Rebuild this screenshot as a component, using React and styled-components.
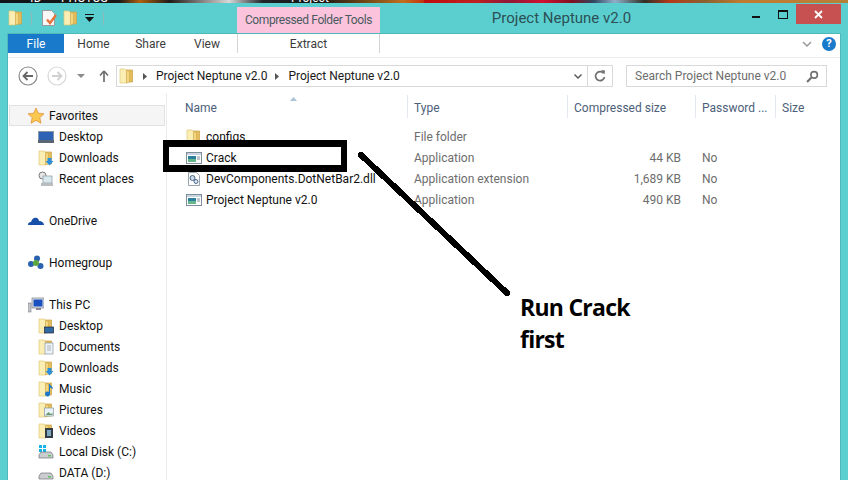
import { Fragment } from "react";
import styled, { createGlobalStyle } from "styled-components";

const Global = createGlobalStyle`
  html, body { margin: 0; padding: 0; background: #5bcfcf; }
  body { font-family: Roboto, "Open Sans", sans-serif; font-size: 12px; color: #1a1a1a; }
  * { box-sizing: border-box; }
`;

const Screen = styled.div`
  position: relative;
  width: 848px;
  height: 480px;
  overflow: hidden;
  background: #5bcfcf;
`;

// the bit of wallpaper that shows above the window
const Wallpaper = styled.div`
  position: relative;
  height: 3px;
  display: flex;
  overflow: hidden;
`;

const WallHalf = styled.div`
  flex: 1;
  background: ${(p) => p.$bg};
`;

const WallLabel = styled.span`
  position: absolute;
  left: ${(p) => p.$x}px;
  top: -8px;
  font-size: 12px;
  line-height: 12px;
  color: #fff;
`;

const TitleBar = styled.div`
  height: 30px;
  display: flex;
  padding-left: 8px;
`;

const Quick = styled.div`
  display: flex;
  align-items: center;
  height: 30px;
  width: 229px;
`;

const QuickSlot = styled.div`
  display: flex;
  margin-left: ${(p) => p.$ml || 0}px;
`;

const QuickSep = styled.div`
  width: 1px;
  height: 13px;
  margin-left: ${(p) => p.$ml}px;
  background: #8fb8b8;
`;

const ToolsTab = styled.div`
  width: 143px;
  height: 26px;
  margin-top: 4px;
  background: #fbc4dc;
  color: #4a5a5e;
  letter-spacing: -0.4px;
  display: flex;
  align-items: center;
  justify-content: center;
`;

const WindowTitle = styled.div`
  flex: 1;
  text-align: center;
  font-size: 15px;
  line-height: 31px;
  color: #2c5056;
`;

const Controls = styled.div`
  display: flex;
  align-items: flex-start;
  margin: 1px 7px 0 0;
`;

const Ctrl = styled.div`
  width: ${(p) => p.$w}px;
  height: 20px;
  display: flex;
  align-items: center;
  justify-content: center;
  background: ${(p) => p.$bg || "transparent"};
`;

const Win = styled.div`
  margin: 0 7px;
  height: 447px;
  background: #fff;
  border: 1px solid #4fb8b8;
  border-bottom: none;
  display: flex;
  flex-direction: column;
`;

const Ribbon = styled.div`
  height: 19px;
  display: flex;
  align-items: stretch;
`;

const FileTab = styled.div`
  width: 56px;
  background: #1979ca;
  color: #fff;
  display: flex;
  align-items: center;
  justify-content: center;
`;

const Tab = styled.div`
  width: ${(p) => p.$w}px;
  display: flex;
  align-items: center;
  justify-content: center;
  color: #3c3c3c;
`;

const ExtractTab = styled(Tab)`
  border-left: 1px solid #d4d4d4;
  border-right: 1px solid #d4d4d4;
  margin-left: 1px;
`;

const RibbonEnd = styled.div`
  margin-left: auto;
  display: flex;
  align-items: center;
  gap: 10px;
  padding-right: 4px;
`;

const Help = styled.div`
  width: 14px;
  height: 14px;
  border-radius: 50%;
  background: #1979ca;
  color: #fff;
  font-weight: 700;
  font-size: 11px;
  line-height: 14px;
  text-align: center;
`;

const NavBar = styled.div`
  height: 36px;
  margin-top: 4px;
  border-top: 1px solid #ececec;
  display: flex;
  align-items: flex-start;
  padding: 7px 13px 0 10px;
`;

const NavButtons = styled.div`
  display: flex;
  align-items: center;
  width: 98px;
  height: 22px;
`;

const NavSlot = styled.div`
  display: flex;
  margin-right: ${(p) => p.$mr}px;
`;

const Address = styled.div`
  width: 497px;
  height: 22px;
  border: 1px solid #d9d9d9;
  display: flex;
  align-items: center;
  padding-left: 2px;
  color: #1a1a1a;
`;

const Crumb = styled.span`
  display: inline-flex;
  align-items: center;
  gap: 9px;
  margin-left: 8px;
`;

const Chevron = styled.div`
  margin-left: auto;
  width: 14px;
  display: flex;
  justify-content: center;
  margin-right: 2px;
`;

const Refresh = styled.div`
  width: 25px;
  height: 100%;
  border-left: 1px solid #d9d9d9;
  display: flex;
  align-items: center;
  justify-content: center;
`;

const Search = styled.div`
  width: 201px;
  height: 22px;
  margin-left: 13px;
  border: 1px solid #d9d9d9;
  display: flex;
  align-items: center;
  justify-content: space-between;
  padding: 0 7px 0 8px;
  color: #6d6d6d;
`;

const Body = styled.div`
  flex: 1;
  display: flex;
  min-height: 0;
`;

const NavPane = styled.div`
  width: 159px;
  border-right: 1px solid #ececec;
  padding-top: 12px;
  flex-shrink: 0;
`;

const NavRow = styled.div`
  height: 21px;
  display: flex;
  align-items: center;
  gap: 5px;
  padding-left: ${(p) => (p.$sub ? 28 : 18)}px;
  margin-bottom: ${(p) => p.$gap || 0}px;
  margin-left: 1px;
  margin-right: 1px;
  color: #111;
  border: 1px solid ${(p) => (p.$active ? "#e2e2e2" : "transparent")};
  background: ${(p) => (p.$active ? "#f5f5f5" : "transparent")};
  white-space: nowrap;
`;

const NavIcon = styled.div`
  width: 16px;
  height: 16px;
  flex-shrink: 0;
  display: flex;
`;

const Files = styled.div`
  flex: 1;
  position: relative;
  padding: 2px 0 0 13px;
`;

const SortMark = styled.svg`
  position: absolute;
  left: 123px;
  top: 4px;
`;

const Grid = styled.div`
  display: grid;
  grid-template-columns: 227px 160px 128px 80px 60px;
`;

const Head = styled.div`
  height: 23px;
  display: flex;
  align-items: center;
  color: #4c607a;
  padding: 2px 0 0 ${(p) => p.$pl || 6}px;
  border-left: ${(p) => (p.$first ? "none" : "1px solid #e3e9ef")};
  margin-bottom: 8px;
  white-space: nowrap;
`;

const NameCell = styled.div`
  height: 21px;
  display: flex;
  align-items: center;
  gap: 4px;
  padding-left: 6px;
  color: #111;
  white-space: nowrap;
`;

const Cell = styled.div`
  height: 21px;
  display: flex;
  align-items: center;
  color: #6d6d6d;
  padding-left: 7px;
  white-space: nowrap;
`;

const SizeCell = styled(Cell)`
  justify-content: flex-end;
  padding-right: 14px;
`;

const Overlay = styled.svg`
  position: absolute;
  left: 0;
  top: 0;
  pointer-events: none;
`;

const Marker = styled.div`
  position: absolute;
  left: 163px;
  top: 140px;
  width: 184px;
  height: 32px;
  border: solid #000;
  border-width: 7px 6px;
`;

const Note = styled.div`
  position: absolute;
  left: 520px;
  top: 291px;
  width: 130px;
  font-family: "Open Sans", sans-serif;
  font-size: 23px;
  line-height: 32px;
  font-weight: 700;
  color: #000;
  letter-spacing: -0.75px;
`;

function Folder({ badge }) {
  return (
    <svg width="16" height="16" viewBox="0 0 16 16">
      <path d="M6 2h7.500v12H6z" fill="#e4bd5a" stroke="#c9a248" strokeWidth=".7" />
      <path d="M1 1h5l1.500 1.500V15H1z" fill="#fbeeb4" stroke="#e0c878" strokeWidth=".7" />
      <path d="M7.500 2.500l3 1V14l-3 1z" fill="#f2d680" stroke="#c9a248" strokeWidth=".5" />
      {badge}
    </svg>
  );
}

const arrowBadge = <path d="M9.500 8h4v3h2l-4 4.500-4-4.500h2z" fill="#2b8fdc" />;
const screenBadge = <rect x="6.500" y="9" width="9" height="6" fill="#2f6aa5" stroke="#223" strokeWidth=".7" />;
const docBadge = <g><rect x="7" y="4" width="8" height="11" fill="#eef3f8" stroke="#8a97a5" strokeWidth=".7" /><path d="M9 7h4M9 9h4M9 11h4" stroke="#8a97a5" strokeWidth=".7" /></g>;
const musicBadge = <path d="M11 3h1c0 2 3 2 3 5l-3-1.500V13a2.500 2.500 0 1 1-1-2z" fill="#1a78c8" />;
const picBadge = <g><rect x="6.500" y="6" width="9" height="8" fill="#e8f2f8" stroke="#8a97a5" strokeWidth=".7" /><path d="M7.500 13l3-3 2 2 2-1v2z" fill="#6a9c6e" /></g>;
const videoBadge = <g><rect x="7" y="5" width="8" height="10" fill="#333c44" /><rect x="9" y="7" width="4" height="6" fill="#7fa9c0" /></g>;

function AppIcon() {
  return (
    <svg width="16" height="16" viewBox="0 0 16 16">
      <rect x=".5" y="2.500" width="15" height="11" fill="#fff" stroke="#7f8c99" />
      <rect x="1" y="3" width="14" height="2" fill="#c8d4e0" />
      <rect x="2" y="6" width="8" height="6" fill="#2a7f9e" />
      <rect x="2" y="9" width="8" height="3" fill="#67b58a" />
      <path d="M11 7h3M11 9h3" stroke="#7f8c99" />
    </svg>
  );
}

function DllIcon() {
  return (
    <svg width="16" height="16" viewBox="0 0 16 16">
      <path d="M2.500 1.500h8l3 3v10h-11z" fill="#fff" stroke="#9aa4ae" />
      <circle cx="6.500" cy="7" r="2.500" fill="#cfdbe8" stroke="#48668a" />
      <circle cx="10" cy="10.500" r="2" fill="#dfe7ef" stroke="#48668a" />
    </svg>
  );
}

function Drive({ win }) {
  return (
    <svg width="16" height="16" viewBox="0 0 16 16">
      {win && <path d="M1 1h3v3H1zM5 1h3v3H5zM1 5h3v3H1zM5 5h3v3H5z" fill="#17b4e8" />}
      <path d="M1 11l2-3h10l2 3v3H1z" fill="#c9cdd0" stroke="#6e7478" strokeWidth=".7" />
      <rect x="10" y="11" width="3" height="1.500" fill="#5fc25f" />
    </svg>
  );
}

const favourites = [
  { name: "Desktop", icon: (
    <svg width="16" height="16" viewBox="0 0 16 16">
      <rect x="0" y="2" width="16" height="12" fill="#8a98a6" />
      <rect x="1" y="3" width="14" height="8" fill="#2d62b5" />
      <rect x="0" y="11" width="16" height="3" fill="#5a6672" />
    </svg>
  ) },
  { name: "Downloads", icon: <Folder badge={arrowBadge} /> },
  { name: "Recent places", icon: (
    <svg width="16" height="16" viewBox="0 0 16 16">
      <circle cx="4.500" cy="4.500" r="3.500" fill="#e6e6e6" stroke="#7a7a7a" />
      <rect x="5" y="5" width="9" height="7" fill="#d8e8ee" stroke="#8a97a5" strokeWidth=".7" />
      <rect x="3" y="12" width="12" height="3" fill="#b9bdc0" />
    </svg>
  ) },
];

const pcFolders = [
  { name: "Desktop", badge: screenBadge },
  { name: "Documents", badge: docBadge },
  { name: "Downloads", badge: arrowBadge },
  { name: "Music", badge: musicBadge },
  { name: "Pictures", badge: picBadge },
  { name: "Videos", badge: videoBadge },
];

const files = [
  { name: "configs", type: "File folder", icon: <Folder /> },
  { name: "Crack", type: "Application", size: "44 KB", pw: "No", icon: <AppIcon /> },
  { name: "DevComponents.DotNetBar2.dll", type: "Application extension", size: "1,689 KB", pw: "No", icon: <DllIcon /> },
  { name: "Project Neptune v2.0", type: "Application", size: "490 KB", pw: "No", icon: <AppIcon /> },
];

export default function App() {
  return (
    <Screen>
      <Global />
      <Wallpaper>
        <WallHalf $bg="linear-gradient(90deg,#101418 0,#181818 28%,#b06010 33%,#201c18 40%,#d8d8d8 54%,#202428 62%,#141414 75%,#805018 88%,#c07020 95%,#c83010 100%)" />
        <WallHalf $bg="linear-gradient(90deg,#c00c0c 0,#c02020 12%,#901838 20%,#d01030 28%,#801020 35%,#304860 40%,#90b0c8 45%,#303028 52%,#b83818 58%,#8a6030 66%,#c07c30 75%,#b88038 100%)" />
        <WallLabel $x={27}>4D</WallLabel>
        <WallLabel $x={61}>PHOTOS</WallLabel>
        <WallLabel $x={291}>Project</WallLabel>
      </Wallpaper>
      <TitleBar>
        <Quick>
          <QuickSlot><Folder /></QuickSlot>
          <QuickSep $ml={7} />
          <QuickSlot $ml={10}>
            <svg width="16" height="16" viewBox="0 0 16 16">
              <path d="M.5 .5h9l3 3v12H.5z" fill="#f8f8f8" stroke="#9a9a9a" />
              <path d="M5 9.500l3 3.500 6-8" fill="none" stroke="#e9733c" strokeWidth="2.400" />
            </svg>
          </QuickSlot>
          <QuickSlot $ml={5}><Folder /></QuickSlot>
          <QuickSlot $ml={6}>
            <svg width="9" height="8" viewBox="0 0 9 8">
              <path d="M0 .5h9" stroke="#111" />
              <path d="M0 3h9L4.500 8z" fill="#111" />
            </svg>
          </QuickSlot>
          <QuickSep $ml={9} />
        </Quick>
        <ToolsTab>Compressed Folder Tools</ToolsTab>
        <WindowTitle>Project Neptune v2.0</WindowTitle>
        <Controls>
          <Ctrl $w={26}>
            <svg width="8" height="7"><rect width="8" height="2" y="5" fill="#111" /></svg>
          </Ctrl>
          <Ctrl $w={27}>
            <svg width="10" height="9"><rect x=".5" y=".5" width="9" height="8" fill="none" stroke="#111" /><rect width="10" height="2" fill="#111" /></svg>
          </Ctrl>
          <Ctrl $w={45} $bg="#c75050">
            <svg width="9" height="9" viewBox="0 0 9 9"><path d="M1 1l7 7M8 1l-7 7" stroke="#fff" strokeWidth="1.800" /></svg>
          </Ctrl>
        </Controls>
      </TitleBar>
      <Win>
        <Ribbon>
          <FileTab>File</FileTab>
          <Tab $w={59}>Home</Tab>
          <Tab $w={55}>Share</Tab>
          <Tab $w={58}>View</Tab>
          <ExtractTab $w={143}>Extract</ExtractTab>
          <RibbonEnd>
            <svg width="10" height="6" viewBox="0 0 10 6"><path d="M1 1l4 4 4-4" fill="none" stroke="#9a9a9a" strokeWidth="1.500" /></svg>
            <Help>?</Help>
          </RibbonEnd>
        </Ribbon>
        <NavBar>
          <NavButtons>
            <NavSlot $mr={9}>
              <svg width="20" height="20" viewBox="0 0 20 20">
                <circle cx="10" cy="10" r="9" fill="#fff" stroke="#8a8a8a" strokeWidth="1.200" />
                <path d="M15 10H6M9.500 6L5.500 10l4 4" fill="none" stroke="#666" strokeWidth="1.800" />
              </svg>
            </NavSlot>
            <NavSlot $mr={10}>
              <svg width="20" height="20" viewBox="0 0 20 20">
                <circle cx="10" cy="10" r="9" fill="#fff" stroke="#d8d8d8" strokeWidth="1.200" />
                <path d="M5 10h9M10.500 6l4 4-4 4" fill="none" stroke="#d0d0d0" strokeWidth="1.800" />
              </svg>
            </NavSlot>
            <NavSlot $mr={14}>
              <svg width="8" height="4" viewBox="0 0 8 4"><path d="M0 0h8L4 4z" fill="#8a8a8a" /></svg>
            </NavSlot>
            <svg width="10" height="12" viewBox="0 0 10 12"><path d="M5 1L1 5.500M5 1l4 4.500M5 1v11" fill="none" stroke="#707070" strokeWidth="1.700" /></svg>
          </NavButtons>
          <Address>
            <Folder />
            <Crumb>
              <svg width="4" height="7"><path d="M0 0l4 3.500L0 7z" fill="#555" /></svg>
              Project Neptune v2.0
            </Crumb>
            <Crumb>
              <svg width="4" height="7"><path d="M0 0l4 3.500L0 7z" fill="#555" /></svg>
              Project Neptune v2.0
            </Crumb>
            <Chevron>
              <svg width="8" height="5" viewBox="0 0 8 5"><path d="M.5 .5L4 4 7.500 .5" fill="none" stroke="#555" strokeWidth="1.400" /></svg>
            </Chevron>
            <Refresh>
              <svg width="12" height="12" viewBox="0 0 12 12"><path d="M9.500 3.200A4.500 4.500 0 1 0 10.500 7" fill="none" stroke="#707070" strokeWidth="1.700" /><path d="M7 0l4 .5-.5 4z" fill="#707070" /></svg>
            </Refresh>
          </Address>
          <Search>
            Search Project Neptune v2.0
            <svg width="13" height="13" viewBox="0 0 12 12"><circle cx="7.500" cy="4.500" r="3" fill="none" stroke="#707070" strokeWidth="1.500" /><path d="M5 7l-4 4" stroke="#707070" strokeWidth="2" /></svg>
          </Search>
        </NavBar>
        <Body>
          <NavPane>
            <NavRow $active>
              <NavIcon>
                <svg width="16" height="16" viewBox="0 0 16 16"><path d="M8 0l2.300 5.200 5.700.6-4.200 3.800 1.200 5.600L8 12.400l-5 2.800 1.200-5.600L0 5.800l5.700-.6z" fill="#f8c850" stroke="#e08a30" strokeWidth=".7" /></svg>
              </NavIcon>
              Favorites
            </NavRow>
            {favourites.map((f, i) => (
              <NavRow key={f.name} $sub $gap={i === 2 ? 21 : 0}>
                <NavIcon>{f.icon}</NavIcon>
                {f.name}
              </NavRow>
            ))}
            <NavRow $gap={21}>
              <NavIcon>
                <svg width="16" height="16" viewBox="0 0 16 16"><path d="M0 12c0-2 1-3 3-3 1-4 4-5 6-4 1 .5 2 2 2 3 3 0 5 2 5 4z" fill="#1650a8" /></svg>
              </NavIcon>
              OneDrive
            </NavRow>
            <NavRow $gap={21}>
              <NavIcon>
                <svg width="16" height="16" viewBox="0 0 16 16">
                  <circle cx="9" cy="3.500" r="3" fill="#2a62b0" />
                  <circle cx="3" cy="9" r="3" fill="#2a62b0" />
                  <circle cx="12.500" cy="11" r="3" fill="#2a62b0" />
                  <circle cx="8" cy="8" r="3" fill="#5ca83c" />
                </svg>
              </NavIcon>
              Homegroup
            </NavRow>
            <NavRow>
              <NavIcon>
                <svg width="16" height="16" viewBox="0 0 16 16">
                  <rect x="4" y="1" width="12" height="10" fill="#dfe3e6" stroke="#667" strokeWidth=".6" />
                  <rect x="5.500" y="2.500" width="9" height="7" fill="#1a50c0" />
                  <rect x="8" y="11" width="5" height="2" fill="#889" />
                  <rect x="0" y="6" width="3" height="9" fill="#c4c8ca" stroke="#667" strokeWidth=".5" />
                </svg>
              </NavIcon>
              This PC
            </NavRow>
            {pcFolders.map((f) => (
              <NavRow key={f.name} $sub>
                <NavIcon><Folder badge={f.badge} /></NavIcon>
                {f.name}
              </NavRow>
            ))}
            <NavRow $sub><NavIcon><Drive win /></NavIcon>Local Disk (C:)</NavRow>
            <NavRow $sub><NavIcon><Drive /></NavIcon>DATA (D:)</NavRow>
          </NavPane>
          <Files>
            <SortMark width="7" height="4" viewBox="0 0 7 4"><path d="M0 4l3.500-4L7 4z" fill="#a9c4d8" /></SortMark>
            <Grid>
              <Head $first $pl={5}>Name</Head>
              <Head>Type</Head>
              <Head>Compressed size</Head>
              <Head>Password ...</Head>
              <Head>Size</Head>
              {files.map((f) => (
                <Fragment key={f.name}>
                  <NameCell>{f.icon}{f.name}</NameCell>
                  <Cell>{f.type}</Cell>
                  <SizeCell>{f.size}</SizeCell>
                  <Cell>{f.pw}</Cell>
                  <Cell />
                </Fragment>
              ))}
            </Grid>
          </Files>
        </Body>
      </Win>
      <Marker />
      <Overlay width="848" height="480">
        <path d="M361 155L507 293" fill="none" stroke="#000" strokeWidth="6" strokeLinecap="round" shapeRendering="crispEdges" />
      </Overlay>
      <Note>Run Crack first</Note>
    </Screen>
  );
}
